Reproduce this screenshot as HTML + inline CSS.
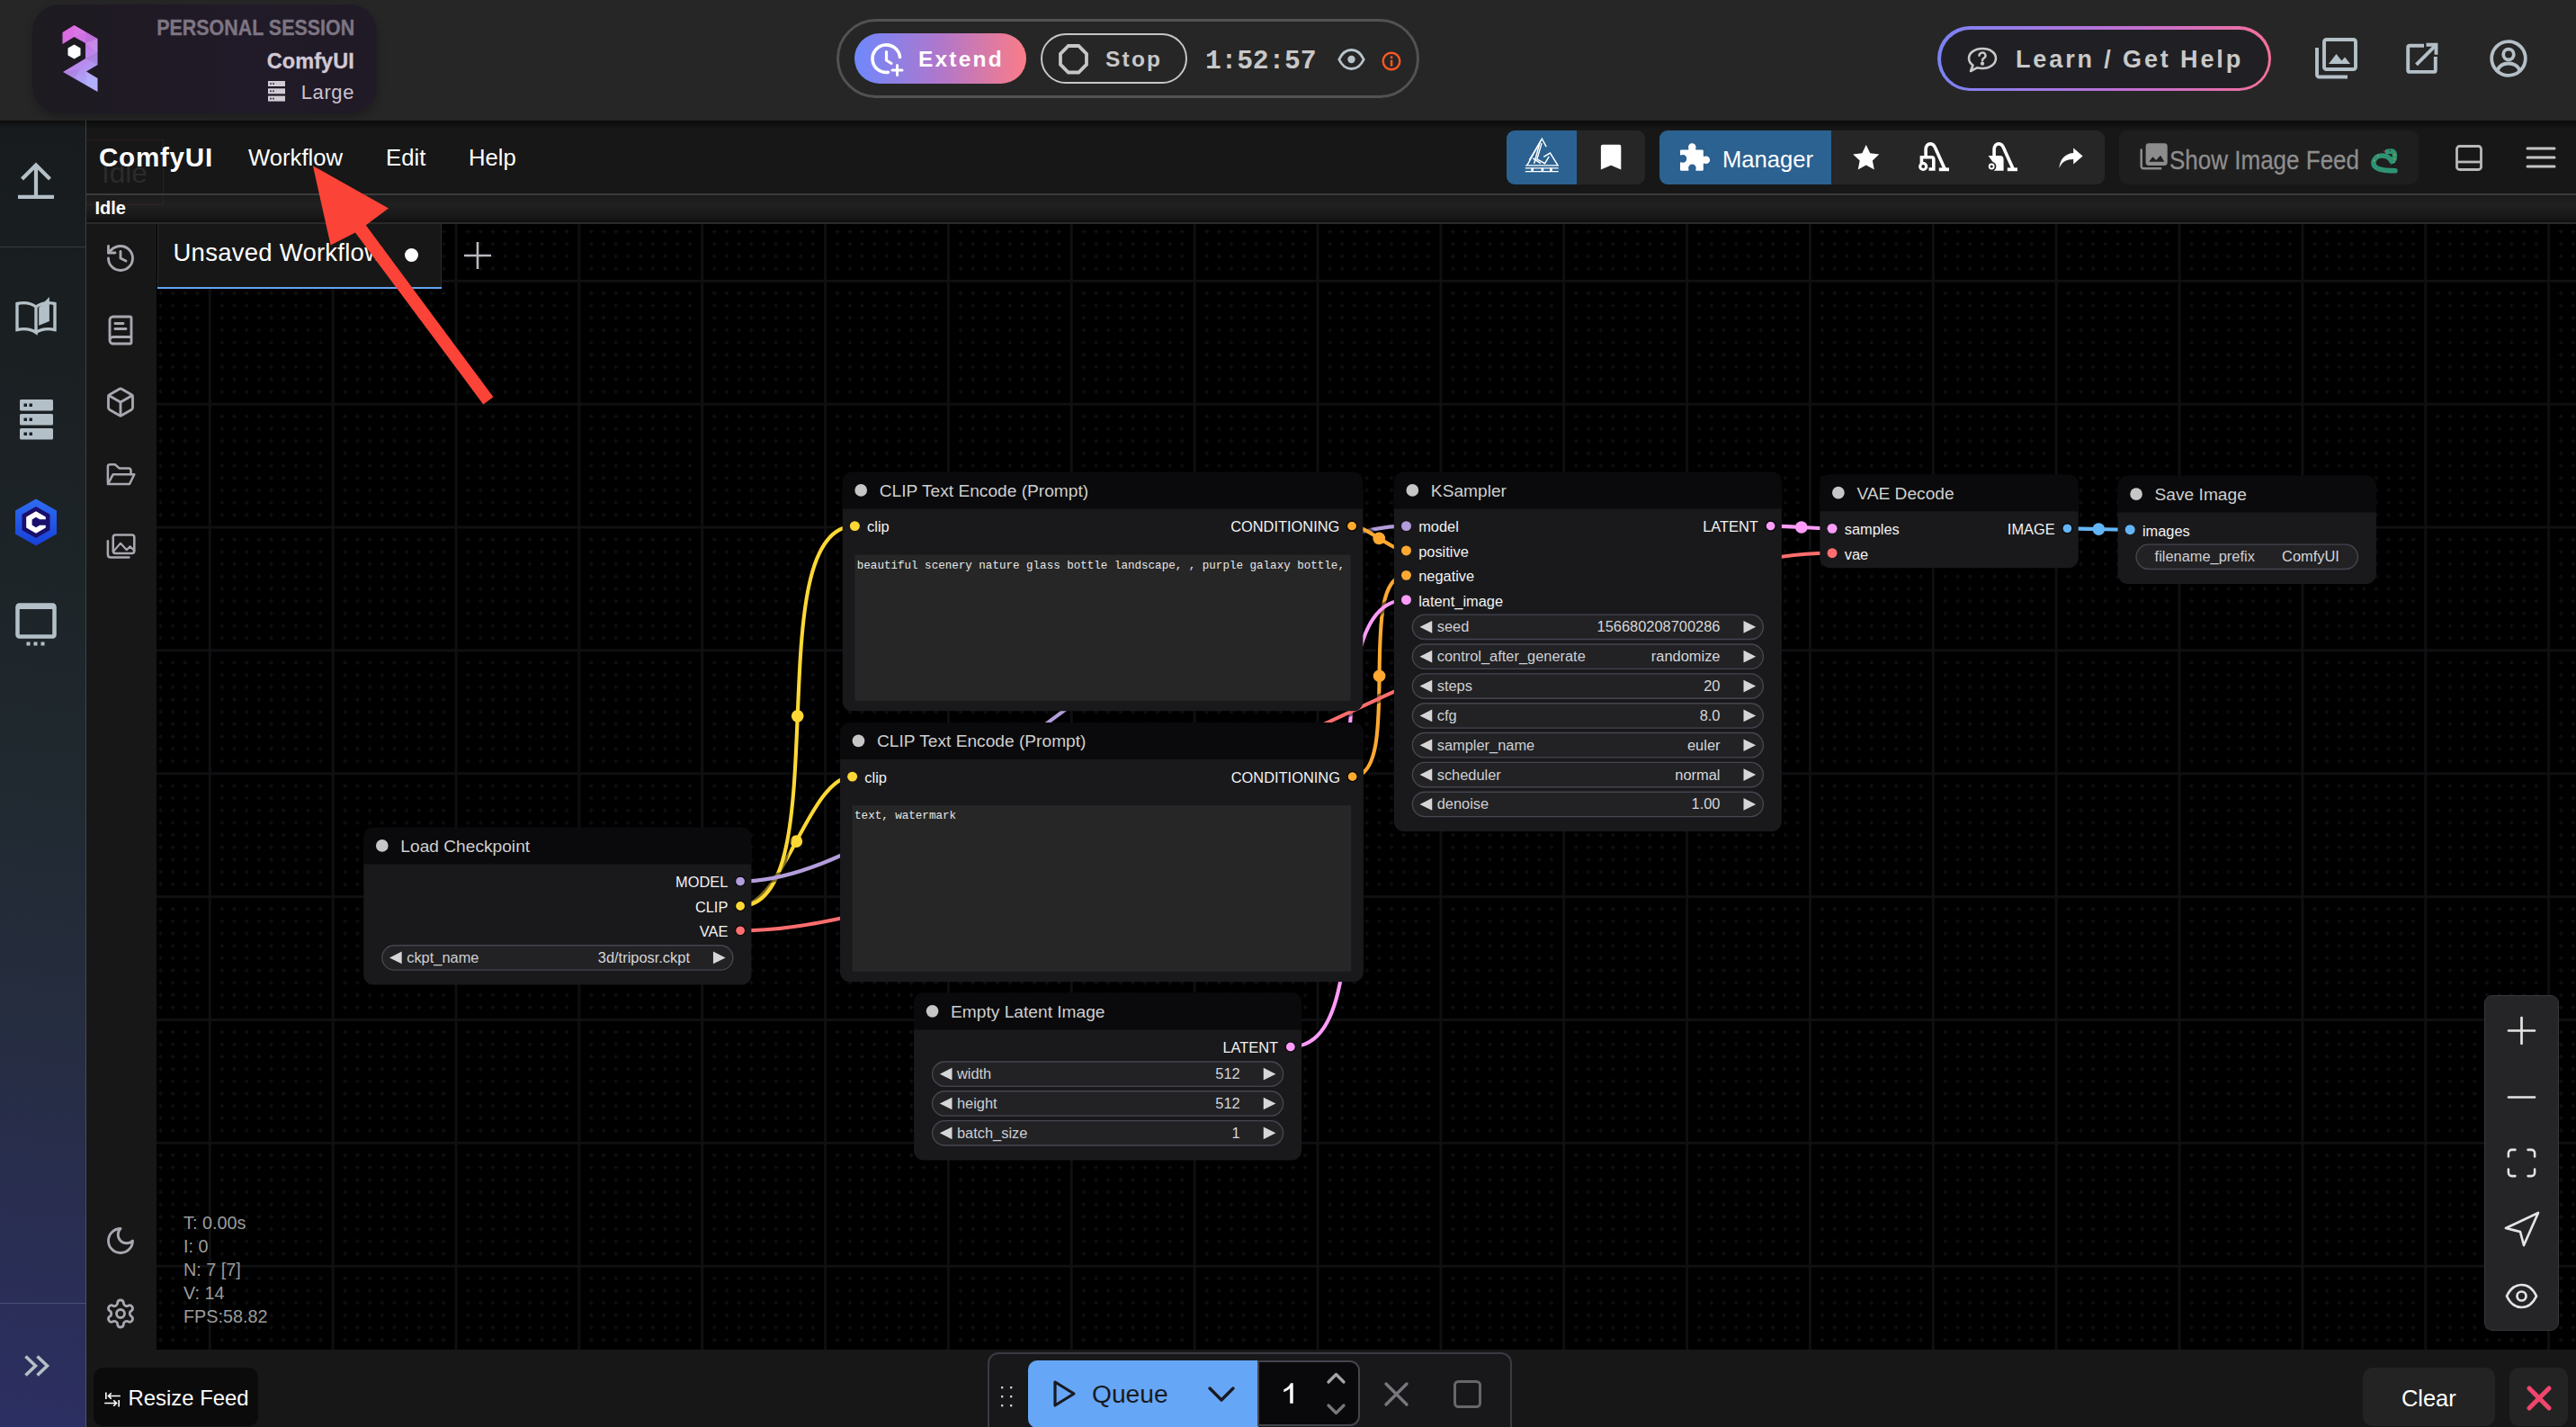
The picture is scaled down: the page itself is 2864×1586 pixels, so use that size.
<!DOCTYPE html>
<html><head><meta charset="utf-8"><title>ComfyUI</title>
<style>
*{box-sizing:border-box;margin:0;padding:0}
html,body{width:2864px;height:1586px;overflow:hidden;background:#171717}
body{position:relative;font-family:"Liberation Sans",sans-serif;color:#fff}
.abs{position:absolute}
.t{position:absolute;white-space:nowrap;line-height:1}
svg{position:absolute;overflow:visible}
</style></head><body>

<div class="abs" style="left:0;top:0;width:2864px;height:135px;background:#262626"></div>
<div class="abs" style="left:0;top:135px;width:2864px;height:8px;background:linear-gradient(#0c0c0c,rgba(23,23,23,0))"></div>
<!-- session card -->
<div class="abs" style="left:36px;top:5px;width:383px;height:121px;border-radius:30px;background:linear-gradient(90deg,#1d1a20 0%,#211a28 60%,#201a26 100%);box-shadow:0 4px 10px rgba(0,0,0,.25)"></div>
<svg style="left:69px;top:27px" width="41" height="76" viewBox="0 0 41 76">
<defs><linearGradient id="lgo" x1="0" y1="0" x2="0.35" y2="1"><stop offset="0" stop-color="#e766e0"/><stop offset="0.5" stop-color="#c378e6"/><stop offset="1" stop-color="#a9a9fb"/></linearGradient></defs>
<path d="M0.5 9 L13.5 1 L39.5 16 L39.5 45 L27 52.5 L39.5 60 L39.5 75 L1 53 L26 38 L26 21 L13.5 14 L0.5 22 Z" fill="url(#lgo)"/>
<path d="M13.500 1L26.500 8.500 13.500 14Z" fill="#fff" opacity=".06"/><path d="M26.500 8.500L39.500 16 26 21Z" fill="#000" opacity=".05"/><path d="M39.500 16V31L26 21Z" fill="#fff" opacity=".12"/><path d="M39.500 31V45L26 38Z" fill="#000" opacity=".07"/><path d="M1 53L20 49.500 14 60.500Z" fill="#000" opacity=".06"/><path d="M27 52.500L39.500 60V75L27 68Z" fill="#fff" opacity=".10"/><path d="M13.5 22.5 L20.5 26.5 L20.5 34.5 L13.5 38.5 L6.5 34.5 L6.5 26.5 Z" fill="#fff"/>
</svg>
<div class="t" id="ps" style="right:2470px;top:19.800px;font-size:23.5px;font-weight:bold;color:#7d7582;transform-origin:100% 50%;transform:scaleX(0.912);-webkit-text-stroke:0.35px #7d7582">PERSONAL SESSION</div>
<div class="t" id="cu" style="right:2470px;top:56.8px;font-size:23.5px;font-weight:bold;color:#d2c8d4;letter-spacing:0.1px;-webkit-text-stroke:0.3px #d2c8d4">ComfyUI</div>
<div class="t" id="lg_" style="right:2470px;top:92px;font-size:22px;color:#cbc2ce;letter-spacing:0.6px">Large</div>
<svg style="left:298px;top:90px" width="19" height="23" viewBox="0 0 19 23"><g fill="#d0cdd2"><rect x="0" y="0" width="19" height="6"/><rect x="0" y="8.3" width="19" height="6"/><rect x="0" y="16.6" width="19" height="6"/></g><g fill="#5a2a6a"><rect x="2" y="2.2" width="2" height="1.6"/><rect x="5" y="2.2" width="2" height="1.6"/><rect x="2" y="10.5" width="2" height="1.6"/><rect x="5" y="10.5" width="2" height="1.6"/><rect x="2" y="18.8" width="2" height="1.6"/><rect x="5" y="18.8" width="2" height="1.6"/></g></svg>

<!-- center pill -->
<div class="abs" style="left:930px;top:21px;width:648px;height:88px;border-radius:44px;border:3.5px solid #525252"></div>
<div class="abs" style="left:950px;top:37px;width:191px;height:56px;border-radius:28px;background:linear-gradient(90deg,#6f88fc 0%,#b077cb 50%,#fb7c88 100%)"></div>
<svg style="left:968px;top:48.200px" width="40" height="38" viewBox="0 0 40 38" fill="none" stroke="#fff" stroke-width="3.6" stroke-linecap="round" stroke-linejoin="round"><path d="M32.5 15.5A15.3 15.3 0 1 0 19.5 32.3"/><path d="M17.5 9.5V19L23 22.5" stroke-width="3.2"/><path d="M29.5 24.5V35.5M24 30H35" stroke-width="3"/></svg>
<div class="t" id="ext" style="left:1021px;top:54px;font-size:24.5px;font-weight:bold;color:#fff;letter-spacing:2.2px">Extend</div>
<div class="abs" style="left:1157px;top:37px;width:163px;height:56px;border-radius:28px;border:2px solid #c6c6c6"></div>
<svg style="left:1177px;top:48.700px" width="33" height="33.500" viewBox="0 0 33 33.500" fill="none" stroke="#c6c6c6" stroke-width="3.800" stroke-linejoin="miter"><path d="M10.800 2H22.200L31 10.800V22.700L22.200 31.500H10.800L2 22.700V10.800Z"/></svg>
<div class="t" id="stp" style="left:1229px;top:54px;font-size:24.5px;font-weight:bold;color:#c8c8c8;letter-spacing:2.2px">Stop</div>
<div class="t" id="tm" style="left:1340px;top:53.5px;font-size:29.7px;font-weight:bold;color:#c8c8c8;font-family:'Liberation Mono',monospace;letter-spacing:-0.2px">1:52:57</div>
<svg style="left:1487px;top:53px" width="31" height="26" viewBox="0 0 31 26" fill="none" stroke="#b8c4cb" stroke-width="2.8"><path d="M1.8 13C5 6 10 2.5 15.5 2.5S26 6 29.2 13C26 20 21 23.5 15.5 23.5S5 20 1.8 13Z"/><circle cx="15.5" cy="13" r="4.2" fill="#b8c4cb" stroke="none"/></svg>
<svg style="left:1536px;top:57px" width="22" height="22" viewBox="0 0 22 22"><circle cx="11" cy="11" r="9.3" fill="none" stroke="#ff5722" stroke-width="2.4"/><rect x="9.8" y="9.6" width="2.5" height="7" fill="#ff5722"/><rect x="9.8" y="5.4" width="2.5" height="2.6" fill="#ff5722"/></svg>

<!-- learn pill -->
<div class="abs" style="left:2154px;top:29px;width:371px;height:72px;border-radius:36px;background:linear-gradient(90deg,#7b83f6 0%,#c56fd3 60%,#f4709a 100%)"></div>
<div class="abs" style="left:2157.5px;top:32.5px;width:364px;height:65px;border-radius:33px;background:#202024"></div>
<svg style="left:2187px;top:52px" width="34" height="30" viewBox="0 0 34 30" fill="none" stroke="#c8c8c8" stroke-width="2.6" stroke-linejoin="round" stroke-linecap="round"><path d="M17 2C8.5 2 2 6.8 2 12.8c0 3 1.7 5.800 4.500 7.700L4 27l7-3.700c1.900.4 3.900.7 6 .7 8.500 0 15-5 15-11.200S25.500 2 17 2Z"/><path d="M13.500 9.800a3.500 3.200 0 1 1 5.200 2.800c-1.200.7-1.700 1.300-1.700 2.600" stroke-width="2.4"/><circle cx="17" cy="18.600" r="0.9" fill="#c8c8c8"/></svg>
<div class="t" id="lrn" style="left:2241px;top:53px;font-size:27px;font-weight:bold;color:#c9c9c9;letter-spacing:2.88px">Learn / Get Help</div>
<!-- right icons -->
<svg style="left:2574px;top:42px" width="47" height="46" viewBox="0 0 47 46" fill="none" stroke="#b4c0c7" stroke-width="3.900" stroke-linejoin="round"><rect x="10" y="2" width="35" height="33" rx="2.500"/><path d="M2 11V41a2.500 2.500 0 0 0 2.500 2.500H36"/><path d="M15 29l8.500-11 6 7.500 3.500-4 6 7.500z" fill="#b4c0c7" stroke="none"/></svg>
<svg style="left:0;top:0" width="2864" height="135" viewBox="0 0 2864 135" fill="none" stroke="#b4c0c7" stroke-width="3.900" stroke-linejoin="miter"><path d="M2695 50.700H2679.200Q2677.200 50.700 2677.200 52.700V77.900Q2677.200 79.900 2679.200 79.900H2705.800Q2707.800 79.900 2707.800 77.900V63"/><path d="M2686.500 71.800L2708 50.300"/><path d="M2697.500 49.800H2708.500V60.800"/></svg>
<svg style="left:2768px;top:44px" width="42" height="42" viewBox="0 0 42 42" fill="none" stroke="#b4c0c7" stroke-width="3.800"><circle cx="21" cy="21" r="18.800"/><circle cx="21" cy="16.500" r="5.800"/><path d="M8.500 34.500C11 28 15.500 26.500 21 26.500S31 28 33.500 34.500"/></svg>

<div class="abs" style="left:0;top:134px;width:95px;height:1452px;background:linear-gradient(186deg,#171b1d 0%,#1b2124 25%,#20292f 50%,#252d3f 68%,#292e52 84%,#2c2f62 100%)"></div>
<div class="abs" style="left:0;top:134px;width:95px;height:8px;background:linear-gradient(#0c0c0c,rgba(23,23,23,0))"></div>
<div class="abs" style="left:94.500px;top:134px;width:1.500px;height:1452px;background:linear-gradient(#3a3f44 0%,#3d4349 50%,#4c527c 100%)"></div>
<div class="abs" style="left:0;top:273.500px;width:95px;height:1.500px;background:#363b3f"></div>
<div class="abs" style="left:0;top:1447.500px;width:95px;height:1.500px;background:#4a4f78"></div>
<svg style="left:19px;top:180px" width="42" height="42" viewBox="0 0 42 42" fill="none" stroke="#b4c0c7" stroke-width="4.200"><path d="M21 38V4M5.500 19L21 3.500 36.500 19M1 38.800H41"/></svg>
<svg style="left:17px;top:329px" width="46" height="43" viewBox="0 0 46 43" fill="none" stroke="#b4c0c7" stroke-width="3.400" stroke-linejoin="miter"><path d="M2 8.500C9 7 17 7.500 23 12V40.500C17 36.500 9 36 2 37.500Z"/><path d="M23 12C29 7.500 37 7 44 8.500V37.500C37 36 29 36.500 23 40.500"/><path d="M26.200 12.700L37.900 1V28L26.200 32.700Z" fill="#b4c0c7" stroke="none"/></svg>
<svg style="left:22px;top:444px" width="37" height="46" viewBox="0 0 37 46"><g fill="#b4c0c7"><rect x="0" y="0" width="37" height="12.500" rx="1.500"/><rect x="0" y="16" width="37" height="12.500" rx="1.500"/><rect x="0" y="32" width="37" height="12.500" rx="1.500"/></g><g fill="#1a2026"><rect x="4.500" y="4.500" width="3.500" height="3.500"/><rect x="10.500" y="4.500" width="3.500" height="3.500"/><rect x="4.500" y="20.500" width="3.500" height="3.500"/><rect x="10.500" y="20.500" width="3.500" height="3.500"/><rect x="4.500" y="36.500" width="3.500" height="3.500"/><rect x="10.500" y="36.500" width="3.500" height="3.500"/></g></svg>
<svg style="left:16px;top:554px" width="48" height="53" viewBox="0 0 48 53"><defs><linearGradient id="hx" x1="0" y1="0" x2="0" y2="1"><stop offset="0" stop-color="#2f6df2"/><stop offset="1" stop-color="#1740d8"/></linearGradient></defs><path d="M24 0.500L47 13.500V39.500L24 52.500L1 39.500V13.500Z" fill="url(#hx)"/><path d="M24 9L39.500 17.800V35.200L24 44L8.500 35.200V17.800Z" fill="#1a0f6a"/><path d="M24 14.200L34.800 20.400V23.200H28.200L24 20.800 19.600 23.400V29.600L24 32.200 28.200 29.800H34.800V32.600L24 38.800 13.200 32.600V20.400Z" fill="#fff"/></svg>
<svg style="left:17px;top:670px" width="46" height="50" viewBox="0 0 46 50"><rect x="2.500" y="2.500" width="41" height="35" rx="2" fill="none" stroke="#b4c0c7" stroke-width="4.500"/><rect x="2.500" y="2" width="41" height="5" fill="#b4c0c7"/><g fill="#b4c0c7"><rect x="12.500" y="43.500" width="4" height="4"/><rect x="20.500" y="43.500" width="4" height="4"/><rect x="28.500" y="43.500" width="4" height="4"/></g></svg>
<svg style="left:26px;top:1505px" width="29" height="26" viewBox="0 0 29 26" fill="none" stroke="#b4c0c7" stroke-width="3.600" stroke-linejoin="miter"><path d="M2.500 2.500L13.500 13 2.500 23.500M15.500 2.500L26.500 13 15.500 23.500"/></svg>

<div class="abs" style="left:96px;top:134px;width:2768px;height:82px;background:#171717"></div>
<div class="abs" style="left:96px;top:134px;width:2768px;height:10px;background:linear-gradient(#0b0b0b,rgba(23,23,23,0))"></div>
<div class="t" style="left:113px;top:177px;font-size:31.500px;color:#2b2b2b">Idle</div>
<div class="abs" style="left:96px;top:215px;width:2768px;height:1.500px;background:#3b3b3b"></div>
<div class="abs" style="left:96px;top:216.500px;width:2768px;height:31px;background:linear-gradient(#1b1b1b 0%,#202020 35%,#191919 70%,#101010 100%)"></div>
<div class="abs" style="left:96px;top:247.300px;width:2768px;height:1.700px;background:#292929"></div>
<div class="abs" style="left:96px;top:155px;width:85.500px;height:73px;border:1px solid rgba(90,40,40,0.35);border-left:none"></div>
<div class="t" id="idle" style="left:105.500px;top:221px;font-size:20px;font-weight:bold;color:#fff">Idle</div>
<div class="t" id="logo" style="left:110px;top:159.900px;font-size:29.600px;font-weight:bold;color:#fff;letter-spacing:0.75px">ComfyUI</div>
<div class="t" id="m1" style="left:276px;top:162.600px;font-size:25.700px;color:#fff">Workflow</div>
<div class="t" id="m2" style="left:429px;top:162.600px;font-size:25.700px;color:#fff">Edit</div>
<div class="t" id="m3" style="left:521px;top:162.600px;font-size:25.700px;color:#fff">Help</div>

<!-- group 1 -->
<div class="abs" style="left:1675px;top:145px;width:154px;height:60px;border-radius:9px;background:#262626"></div>
<div class="abs" style="left:1675px;top:145px;width:78px;height:60px;border-radius:9px 0 0 9px;background:#2b6291"></div>
<svg style="left:1670px;top:140px" width="170" height="70" viewBox="0 0 2576 1061" fill="none" stroke="#fff" stroke-width="22" stroke-linejoin="miter" stroke-linecap="butt">
<path d="M420 665L672 215 745 350"/><path d="M395 665H940L810 455 700 522"/><path d="M460 575L655 245"/><path d="M640 270L540 632"/><path d="M668 290L588 560 720 632 792 515"/><path d="M520 545L650 632"/>
<path d="M390 710H950" stroke-width="20"/><path d="M390 766H950" stroke-width="18"/><path d="M510 710V766M680 710V766M825 710V766" stroke-width="40"/>
<path d="M1665 345A30 30 0 0 1 1695 315H1975A30 30 0 0 1 2005 345V735L1835 662 1665 735Z" fill="#fff" stroke="none"/></svg>
<!-- group 2 -->
<div class="abs" style="left:1845px;top:145px;width:495px;height:60px;border-radius:9px;background:#262626"></div>
<div class="abs" style="left:1845px;top:145px;width:191px;height:60px;border-radius:9px 0 0 9px;background:#2b6291"></div>
<svg style="left:1867px;top:158px" width="34" height="33" viewBox="0 0 34 33"><path d="M10 5.500a4.300 4.300 0 1 1 8.600 0c0 1-.5 1.700-.5 2.300 0 .4.300.7.800.7H25.500a1.300 1.300 0 0 1 1.300 1.300v5.300c0 .5.300.8.700.8.600 0 1.300-.5 2.300-.5a4.300 4.300 0 1 1 0 8.600c-1 0-1.700-.5-2.300-.5-.4 0-.7.300-.7.800V30.500a1.300 1.300 0 0 1-1.300 1.300H19c-.5 0-.8-.3-.8-.7 0-.6.500-1.300.5-2.300a4.300 4.300 0 1 0-8.600 0c0 1 .5 1.700.5 2.300 0 .4-.3.700-.8.700H2.300A1.300 1.300 0 0 1 1 30.500V23c0-.5.300-.8.700-.8.600 0 1.300.5 2.300.5a4.300 4.300 0 1 0 0-8.600c-1 0-1.700.5-2.300.5-.4 0-.7-.3-.7-.8V9.800A1.300 1.300 0 0 1 2.300 8.500H9.700c.5 0 .8-.3.800-.7 0-.6-.5-1.300-.5-2.300z" fill="#fff"/></svg>
<div class="t" id="mgr" style="left:1915px;top:164.500px;font-size:25.600px;color:#fff">Manager</div>
<svg style="left:2058.500px;top:159.500px" width="31.500" height="29.500" viewBox="0 0 33 32"><path d="M16.500 1L21.300 11.200 32.300 12.500 24.200 20.100 26.300 31 16.500 25.600 6.700 31 8.800 20.100 0.700 12.500 11.700 11.200Z" fill="#fff"/></svg>
<svg style="left:2133.200px;top:158px" width="35" height="33" viewBox="0 0 35 33" fill="none" stroke="#fff" stroke-width="3.600"><path d="M8.100 15V8.100C8.100 4.200 10.300 1.900 13.400 1.900 16 1.900 17.600 3.700 18.800 6.800L29.400 30.200"/><path d="M22.800 30.300H34" stroke-width="3.800"/><path d="M3.400 23.500V16.800H14.300Q16.800 16.800 16.800 19.300V30H11.500"/><circle cx="5.200" cy="27" r="3.500" stroke-width="3.200"/></svg>
<svg style="left:2209.300px;top:158px" width="35" height="33" viewBox="0 0 35 33" fill="none" stroke="#fff" stroke-width="3.600"><path d="M8.100 15V8.100C8.100 4.200 10.300 1.900 13.400 1.900 16 1.900 17.600 3.700 18.800 6.800L29.400 30.200"/><path d="M22.800 30.300H34" stroke-width="3.800"/><path d="M1.600 15H14.300Q18.600 15 18.600 19.300V31.800H8V24Z" fill="#fff" stroke="none"/><circle cx="5.200" cy="27" r="4.300" fill="#fff" stroke="#262626" stroke-width="1.800"/><circle cx="5.200" cy="27" r="1.600" fill="#262626" stroke="none"/></svg>
<svg style="left:2287.500px;top:164px" width="29" height="23.500" viewBox="0 0 30 26"><path d="M18 0.500L29.500 10.500 18 20.500V14.500C9.500 14.500 4 17.500 0.500 25.500 1.500 14.500 7 7.500 18 6.500Z" fill="#fff"/></svg>
<!-- show image feed -->
<div class="abs" style="left:2356px;top:145px;width:333px;height:60px;border-radius:9px;background:#1e1e1e"></div>
<svg style="left:2360px;top:145px" width="340" height="60" viewBox="0 0 2576 455"><path d="M156 155V300Q156 321 177 321H327" fill="none" stroke="#8c8c8c" stroke-width="19"/><rect x="193" y="108" width="183" height="188" rx="26" fill="#8c8c8c"/><path d="M220 264L252 221 281 250 318 211 350 264Z" fill="#1e1e1e"/>
<g fill="none" stroke="#2f9373" stroke-width="42" stroke-linecap="round" stroke-linejoin="round"><path d="M2230 178L2268 175C2302 182 2298 250 2268 262 2236 200 2132 192 2114 265 2106 322 2172 338 2296 340"/></g><path d="M2196 170L2222 190" stroke="#d6336c" stroke-width="7"/><g fill="#c9c23a"><circle cx="2150" cy="212" r="5"/><circle cx="2118" cy="252" r="5"/><circle cx="2292" cy="205" r="5"/><circle cx="2290" cy="240" r="5"/><circle cx="2285" cy="268" r="5"/></g><circle cx="2254" cy="172" r="5" fill="#123"/></svg>
<div class="t" id="sif" style="left:2412px;top:166px;font-size:26px;color:#8e8e8e;-webkit-text-stroke:0.25px #8e8e8e;transform-origin:0 100%;transform:scaleY(1.10)">Show Image Feed</div>
<svg style="left:2730px;top:161px" width="30" height="29" viewBox="0 0 30 29" fill="none" stroke="#b9b9b9" stroke-width="2.800"><rect x="1.500" y="1.500" width="27" height="26" rx="3"/><path d="M1.500 19H28.500"/></svg>
<svg style="left:2808px;top:163px" width="34" height="24" viewBox="0 0 34 24" stroke="#c4c4c4" stroke-width="3" stroke-linecap="round"><path d="M2 2H32M2 12H32M2 22H32"/></svg>

<div class="abs" style="left:96px;top:249px;width:78.500px;height:1251px;background:#171717"></div>
<svg style="left:116px;top:269px" width="36" height="36" viewBox="0 0 24 24" fill="none" stroke="#a8a8b0" stroke-width="1.900" stroke-linecap="round" stroke-linejoin="round"><path d="M3 12a9 9 0 1 0 9-9 9.750 9.750 0 0 0-6.740 2.740L3 8"/><path d="M3 3v5h5"/><path d="M12 7v5l4 2"/></svg>
<svg style="left:116px;top:349px" width="36" height="36" viewBox="0 0 24 24" fill="none" stroke="#a8a8b0" stroke-width="1.900" stroke-linecap="round" stroke-linejoin="round"><path d="M4 19.500v-15A2.500 2.500 0 0 1 6.500 2H19a1 1 0 0 1 1 1v18a1 1 0 0 1-1 1H6.500a1 1 0 0 1 0-5H20"/><path d="M8 11h8"/><path d="M8 7h6"/></svg>
<svg style="left:116px;top:429px" width="36" height="36" viewBox="0 0 24 24" fill="none" stroke="#a8a8b0" stroke-width="1.900" stroke-linecap="round" stroke-linejoin="round"><path d="M21 8a2 2 0 0 0-1-1.730l-7-4a2 2 0 0 0-2 0l-7 4A2 2 0 0 0 3 8v8a2 2 0 0 0 1 1.730l7 4a2 2 0 0 0 2 0l7-4A2 2 0 0 0 21 16Z"/><path d="m3.300 7 8.700 5 8.700-5"/><path d="M12 22V12"/></svg>
<svg style="left:113.650px;top:510.670px" width="41.190" height="32.360" viewBox="60 920 140 110" fill="none" stroke="#a8a8b0" stroke-width="8.600" stroke-linejoin="round" stroke-linecap="round"><path d="M80 1005V946Q80 938 88 938H107L123 952H159Q167 952 167 960V974"/><path d="M80 1012L100 975H180L162 1012Z"/></svg>
<svg style="left:113.650px;top:590.100px" width="41.190" height="35.300" viewBox="60 1190 140 120" fill="none" stroke="#a8a8b0" stroke-width="8.600" stroke-linejoin="round" stroke-linecap="round"><rect x="100" y="1205" width="80" height="70" rx="9"/><path d="M80 1228V1279Q80 1290 91 1290H160"/><path d="M102 1267L128 1237 151 1262 164 1249 180 1265" stroke-width="7.500"/></svg>
<svg style="left:116px;top:1361px" width="36" height="36" viewBox="0 0 24 24" fill="none" stroke="#a8a8b0" stroke-width="1.900" stroke-linecap="round" stroke-linejoin="round"><path d="M12 3a6 6 0 0 0 9 9 9 9 0 1 1-9-9Z"/></svg>
<svg style="left:116px;top:1442px" width="36" height="36" viewBox="0 0 24 24" fill="none" stroke="#a8a8b0" stroke-width="1.900" stroke-linecap="round" stroke-linejoin="round"><path d="M12.220 2h-.440a2 2 0 0 0-2 2v.180a2 2 0 0 1-1 1.730l-.430.250a2 2 0 0 1-2 0l-.150-.080a2 2 0 0 0-2.730.730l-.220.380a2 2 0 0 0 .730 2.730l.150.100a2 2 0 0 1 1 1.720v.510a2 2 0 0 1-1 1.740l-.150.090a2 2 0 0 0-.730 2.730l.220.380a2 2 0 0 0 2.730.730l.150-.080a2 2 0 0 1 2 0l.430.250a2 2 0 0 1 1 1.730V20a2 2 0 0 0 2 2h.440a2 2 0 0 0 2-2v-.180a2 2 0 0 1 1-1.730l.430-.250a2 2 0 0 1 2 0l.150.080a2 2 0 0 0 2.730-.730l.220-.390a2 2 0 0 0-.730-2.730l-.150-.080a2 2 0 0 1-1-1.740v-.500a2 2 0 0 1 1-1.740l.150-.090a2 2 0 0 0 .730-2.730l-.220-.380a2 2 0 0 0-2.730-.730l-.150.080a2 2 0 0 1-2 0l-.430-.250a2 2 0 0 1-1-1.730V4a2 2 0 0 0-2-2z"/><circle cx="12" cy="12" r="3"/></svg>
<svg id="lg" width="2690" height="1251" viewBox="174 249 2690 1251" style="position:absolute;left:174px;top:249px;display:block">
<defs>
<pattern id="grid" x="368.7" y="310.9" width="136.86" height="136.86" patternUnits="userSpaceOnUse"><rect width="136.86" height="136.86" fill="#000"/><rect x="0" y="0" width="2.8" height="136.86" fill="#0f1012"/><rect x="0" y="0" width="136.86" height="2.8" fill="#0f1012"/><path d="M12.69 14.99h4.6M14.99 12.69v4.6M12.69 28.67h4.6M14.99 26.37v4.6M12.69 42.36h4.6M14.99 40.06v4.6M12.69 56.04h4.6M14.99 53.74v4.6M12.69 69.73h4.6M14.99 67.43v4.6M12.69 83.42h4.6M14.99 81.12v4.6M12.69 97.1h4.6M14.99 94.8v4.6M12.69 110.79h4.6M14.99 108.49v4.6M12.69 124.47h4.6M14.99 122.17v4.6M26.37 14.99h4.6M28.67 12.69v4.6M26.37 28.67h4.6M28.67 26.37v4.6M26.37 42.36h4.6M28.67 40.06v4.6M26.37 56.04h4.6M28.67 53.74v4.6M26.37 69.73h4.6M28.67 67.43v4.6M26.37 83.42h4.6M28.67 81.12v4.6M26.37 97.1h4.6M28.67 94.8v4.6M26.37 110.79h4.6M28.67 108.49v4.6M26.37 124.47h4.6M28.67 122.17v4.6M40.06 14.99h4.6M42.36 12.69v4.6M40.06 28.67h4.6M42.36 26.37v4.6M40.06 42.36h4.6M42.36 40.06v4.6M40.06 56.04h4.6M42.36 53.74v4.6M40.06 69.73h4.6M42.36 67.43v4.6M40.06 83.42h4.6M42.36 81.12v4.6M40.06 97.1h4.6M42.36 94.8v4.6M40.06 110.79h4.6M42.36 108.49v4.6M40.06 124.47h4.6M42.36 122.17v4.6M53.74 14.99h4.6M56.04 12.69v4.6M53.74 28.67h4.6M56.04 26.37v4.6M53.74 42.36h4.6M56.04 40.06v4.6M53.74 56.04h4.6M56.04 53.74v4.6M53.74 69.73h4.6M56.04 67.43v4.6M53.74 83.42h4.6M56.04 81.12v4.6M53.74 97.1h4.6M56.04 94.8v4.6M53.74 110.79h4.6M56.04 108.49v4.6M53.74 124.47h4.6M56.04 122.17v4.6M67.43 14.99h4.6M69.73 12.69v4.6M67.43 28.67h4.6M69.73 26.37v4.6M67.43 42.36h4.6M69.73 40.06v4.6M67.43 56.04h4.6M69.73 53.74v4.6M67.43 69.73h4.6M69.73 67.43v4.6M67.43 83.42h4.6M69.73 81.12v4.6M67.43 97.1h4.6M69.73 94.8v4.6M67.43 110.79h4.6M69.73 108.49v4.6M67.43 124.47h4.6M69.73 122.17v4.6M81.12 14.99h4.6M83.42 12.69v4.6M81.12 28.67h4.6M83.42 26.37v4.6M81.12 42.36h4.6M83.42 40.06v4.6M81.12 56.04h4.6M83.42 53.74v4.6M81.12 69.73h4.6M83.42 67.43v4.6M81.12 83.42h4.6M83.42 81.12v4.6M81.12 97.1h4.6M83.42 94.8v4.6M81.12 110.79h4.6M83.42 108.49v4.6M81.12 124.47h4.6M83.42 122.17v4.6M94.8 14.99h4.6M97.1 12.69v4.6M94.8 28.67h4.6M97.1 26.37v4.6M94.8 42.36h4.6M97.1 40.06v4.6M94.8 56.04h4.6M97.1 53.74v4.6M94.8 69.73h4.6M97.1 67.43v4.6M94.8 83.42h4.6M97.1 81.12v4.6M94.8 97.1h4.6M97.1 94.8v4.6M94.8 110.79h4.6M97.1 108.49v4.6M94.8 124.47h4.6M97.1 122.17v4.6M108.49 14.99h4.6M110.79 12.69v4.6M108.49 28.67h4.6M110.79 26.37v4.6M108.49 42.36h4.6M110.79 40.06v4.6M108.49 56.04h4.6M110.79 53.74v4.6M108.49 69.73h4.6M110.79 67.43v4.6M108.49 83.42h4.6M110.79 81.12v4.6M108.49 97.1h4.6M110.79 94.8v4.6M108.49 110.79h4.6M110.79 108.49v4.6M108.49 124.47h4.6M110.79 122.17v4.6M122.17 14.99h4.6M124.47 12.69v4.6M122.17 28.67h4.6M124.47 26.37v4.6M122.17 42.36h4.6M124.47 40.06v4.6M122.17 56.04h4.6M124.47 53.74v4.6M122.17 69.73h4.6M124.47 67.43v4.6M122.17 83.42h4.6M124.47 81.12v4.6M122.17 97.1h4.6M124.47 94.8v4.6M122.17 110.79h4.6M124.47 108.49v4.6M122.17 124.47h4.6M124.47 122.17v4.6" stroke="#111214" stroke-width="1.3" fill="none"/></pattern>
</defs>
<rect x="174" y="249" width="2690" height="1251" fill="url(#grid)"/>
<g transform="translate(368.7 310.9) scale(1.3686)" font-family="Liberation Sans, sans-serif">
<path d="M332 508.6C366.76 508.6 388.24 403.5 423 403.5" fill="none" stroke="rgba(0,0,0,0.5)" stroke-width="7"/>
<path d="M332 508.6C366.76 508.6 388.24 403.5 423 403.5" fill="none" stroke="#FDD835" stroke-width="3"/>
<circle cx="377.5" cy="456.05" r="5" fill="#FDD835"/>
<path d="M332 508.6C412.58 508.6 344.42 200 425 200" fill="none" stroke="rgba(0,0,0,0.5)" stroke-width="7"/>
<path d="M332 508.6C412.58 508.6 344.42 200 425 200" fill="none" stroke="#FDD835" stroke-width="3"/>
<circle cx="378.5" cy="354.3" r="5" fill="#FDD835"/>
<path d="M332 488.6C485.29 488.6 719.71 200 873 200" fill="none" stroke="rgba(0,0,0,0.5)" stroke-width="7"/>
<path d="M332 488.6C485.29 488.6 719.71 200 873 200" fill="none" stroke="#B39DDB" stroke-width="3"/>
<circle cx="602.5" cy="344.3" r="5" fill="#B39DDB"/>
<path d="M828.85 200C840.97 200 860.88 220 873 220" fill="none" stroke="rgba(0,0,0,0.5)" stroke-width="7"/>
<path d="M828.85 200C840.97 200 860.88 220 873 220" fill="none" stroke="#FFA931" stroke-width="3"/>
<circle cx="850.92" cy="210" r="5" fill="#FFA931"/>
<path d="M829.28 403.5C871.59 403.5 830.69 240 873 240" fill="none" stroke="rgba(0,0,0,0.5)" stroke-width="7"/>
<path d="M829.28 403.5C871.59 403.5 830.69 240 873 240" fill="none" stroke="#FFA931" stroke-width="3"/>
<circle cx="851.14" cy="321.75" r="5" fill="#FFA931"/>
<path d="M779 623C872.74 623 779.26 260 873 260" fill="none" stroke="rgba(0,0,0,0.5)" stroke-width="7"/>
<path d="M779 623C872.74 623 779.26 260 873 260" fill="none" stroke="#FF9CF9" stroke-width="3"/>
<circle cx="826" cy="441.5" r="5" fill="#FF9CF9"/>
<path d="M1169 200C1181.51 200 1206.49 202 1219 202" fill="none" stroke="rgba(0,0,0,0.5)" stroke-width="7"/>
<path d="M1169 200C1181.51 200 1206.49 202 1219 202" fill="none" stroke="#FF9CF9" stroke-width="3"/>
<circle cx="1194" cy="201" r="5" fill="#FF9CF9"/>
<path d="M332 528.6C566.62 528.6 984.38 222 1219 222" fill="none" stroke="rgba(0,0,0,0.5)" stroke-width="7"/>
<path d="M332 528.6C566.62 528.6 984.38 222 1219 222" fill="none" stroke="#FF6E6E" stroke-width="3"/>
<circle cx="775.5" cy="375.3" r="5" fill="#FF6E6E"/>
<path d="M1410 202C1422.75 202 1448.25 203 1461 203" fill="none" stroke="rgba(0,0,0,0.5)" stroke-width="7"/>
<path d="M1410 202C1422.75 202 1448.25 203 1461 203" fill="none" stroke="#64B5F6" stroke-width="3"/>
<circle cx="1435.5" cy="202.5" r="5" fill="#64B5F6"/>
<g transform="translate(26 474.6)">
<path d="M0 -15H315V90a8 8 0 0 1 -8 8H8a8 8 0 0 1 -8 -8Z" fill="#19191c"/>
<path d="M0 0V-22a8 8 0 0 1 8 -8H307a8 8 0 0 1 8 8V0Z" fill="#0a0a0c"/>
<circle cx="15" cy="-15" r="5" fill="#c6c6c6"/>
<text x="30" y="-10" font-size="14" fill="#cfcfcf">Load Checkpoint</text>
<circle cx="306" cy="14" r="4" fill="#B39DDB" stroke="#000" stroke-width="0.8"/>
<text x="296" y="19" font-size="12" fill="#f2f2f2" text-anchor="end">MODEL</text>
<circle cx="306" cy="34" r="4" fill="#FDD835" stroke="#000" stroke-width="0.8"/>
<text x="296" y="39" font-size="12" fill="#f2f2f2" text-anchor="end">CLIP</text>
<circle cx="306" cy="54" r="4" fill="#FF6E6E" stroke="#000" stroke-width="0.8"/>
<text x="296" y="59" font-size="12" fill="#f2f2f2" text-anchor="end">VAE</text>
<rect x="15" y="66" width="285" height="20" rx="10" fill="#222225" stroke="#45454f" stroke-width="1"/>
<path d="M31 71L21 76L31 81Z" fill="#d6d6d8"/>
<path d="M284 71L294 76L284 81Z" fill="#d6d6d8"/>
<text x="35" y="80" font-size="12" fill="#cfcfd2">ckpt_name</text>
<text x="265" y="80" font-size="12" fill="#d6d6d8" text-anchor="end">3d/triposr.ckpt</text>
</g>
<g transform="translate(473 609)">
<path d="M0 -15H315V98a8 8 0 0 1 -8 8H8a8 8 0 0 1 -8 -8Z" fill="#19191c"/>
<path d="M0 0V-22a8 8 0 0 1 8 -8H307a8 8 0 0 1 8 8V0Z" fill="#0a0a0c"/>
<circle cx="15" cy="-15" r="5" fill="#c6c6c6"/>
<text x="30" y="-10" font-size="14" fill="#cfcfcf">Empty Latent Image</text>
<circle cx="306" cy="14" r="4" fill="#FF9CF9" stroke="#000" stroke-width="0.8"/>
<text x="296" y="19" font-size="12" fill="#f2f2f2" text-anchor="end">LATENT</text>
<rect x="15" y="26" width="285" height="20" rx="10" fill="#222225" stroke="#45454f" stroke-width="1"/>
<path d="M31 31L21 36L31 41Z" fill="#d6d6d8"/>
<path d="M284 31L294 36L284 41Z" fill="#d6d6d8"/>
<text x="35" y="40" font-size="12" fill="#cfcfd2">width</text>
<text x="265" y="40" font-size="12" fill="#d6d6d8" text-anchor="end">512</text>
<rect x="15" y="50" width="285" height="20" rx="10" fill="#222225" stroke="#45454f" stroke-width="1"/>
<path d="M31 55L21 60L31 65Z" fill="#d6d6d8"/>
<path d="M284 55L294 60L284 65Z" fill="#d6d6d8"/>
<text x="35" y="64" font-size="12" fill="#cfcfd2">height</text>
<text x="265" y="64" font-size="12" fill="#d6d6d8" text-anchor="end">512</text>
<rect x="15" y="74" width="285" height="20" rx="10" fill="#222225" stroke="#45454f" stroke-width="1"/>
<path d="M31 79L21 84L31 89Z" fill="#d6d6d8"/>
<path d="M284 79L294 84L284 89Z" fill="#d6d6d8"/>
<text x="35" y="88" font-size="12" fill="#cfcfd2">batch_size</text>
<text x="265" y="88" font-size="12" fill="#d6d6d8" text-anchor="end">1</text>
</g>
<g transform="translate(415 186)">
<path d="M0 -15H422.85V156.31a8 8 0 0 1 -8 8H8a8 8 0 0 1 -8 -8Z" fill="#19191c"/>
<path d="M0 0V-22a8 8 0 0 1 8 -8H414.85a8 8 0 0 1 8 8V0Z" fill="#0a0a0c"/>
<circle cx="15" cy="-15" r="5" fill="#c6c6c6"/>
<text x="30" y="-10" font-size="14" fill="#cfcfcf">CLIP Text Encode (Prompt)</text>
<circle cx="10" cy="14" r="4" fill="#FDD835"/>
<text x="20" y="19" font-size="12" fill="#f2f2f2">clip</text>
<circle cx="413.85" cy="14" r="4" fill="#FFA931" stroke="#000" stroke-width="0.8"/>
<text x="403.85" y="19" font-size="12" fill="#f2f2f2" text-anchor="end">CONDITIONING</text>
<rect x="10" y="37.3" width="402.85" height="118.61" fill="#262626"/>
<text x="11.8" y="48.5" font-size="9.178" font-family="Liberation Mono, monospace" fill="#e8e8e8">beautiful scenery nature glass bottle landscape, , purple galaxy bottle,</text>
</g>
<g transform="translate(413 389.5)">
<path d="M0 -15H425.28V172.61a8 8 0 0 1 -8 8H8a8 8 0 0 1 -8 -8Z" fill="#19191c"/>
<path d="M0 0V-22a8 8 0 0 1 8 -8H417.28a8 8 0 0 1 8 8V0Z" fill="#0a0a0c"/>
<circle cx="15" cy="-15" r="5" fill="#c6c6c6"/>
<text x="30" y="-10" font-size="14" fill="#cfcfcf">CLIP Text Encode (Prompt)</text>
<circle cx="10" cy="14" r="4" fill="#FDD835"/>
<text x="20" y="19" font-size="12" fill="#f2f2f2">clip</text>
<circle cx="416.28" cy="14" r="4" fill="#FFA931" stroke="#000" stroke-width="0.8"/>
<text x="406.28" y="19" font-size="12" fill="#f2f2f2" text-anchor="end">CONDITIONING</text>
<rect x="10" y="37.3" width="405.28" height="134.91" fill="#262626"/>
<text x="11.8" y="48.5" font-size="9.178" font-family="Liberation Mono, monospace" fill="#e8e8e8">text, watermark</text>
</g>
<g transform="translate(863 186)">
<path d="M0 -15H315V254a8 8 0 0 1 -8 8H8a8 8 0 0 1 -8 -8Z" fill="#19191c"/>
<path d="M0 0V-22a8 8 0 0 1 8 -8H307a8 8 0 0 1 8 8V0Z" fill="#0a0a0c"/>
<circle cx="15" cy="-15" r="5" fill="#c6c6c6"/>
<text x="30" y="-10" font-size="14" fill="#cfcfcf">KSampler</text>
<circle cx="10" cy="14" r="4" fill="#B39DDB"/>
<text x="20" y="19" font-size="12" fill="#f2f2f2">model</text>
<circle cx="10" cy="34" r="4" fill="#FFA931"/>
<text x="20" y="39" font-size="12" fill="#f2f2f2">positive</text>
<circle cx="10" cy="54" r="4" fill="#FFA931"/>
<text x="20" y="59" font-size="12" fill="#f2f2f2">negative</text>
<circle cx="10" cy="74" r="4" fill="#FF9CF9"/>
<text x="20" y="79" font-size="12" fill="#f2f2f2">latent_image</text>
<circle cx="306" cy="14" r="4" fill="#FF9CF9" stroke="#000" stroke-width="0.8"/>
<text x="296" y="19" font-size="12" fill="#f2f2f2" text-anchor="end">LATENT</text>
<rect x="15" y="86" width="285" height="20" rx="10" fill="#222225" stroke="#45454f" stroke-width="1"/>
<path d="M31 91L21 96L31 101Z" fill="#d6d6d8"/>
<path d="M284 91L294 96L284 101Z" fill="#d6d6d8"/>
<text x="35" y="100" font-size="12" fill="#cfcfd2">seed</text>
<text x="265" y="100" font-size="12" fill="#d6d6d8" text-anchor="end">156680208700286</text>
<rect x="15" y="110" width="285" height="20" rx="10" fill="#222225" stroke="#45454f" stroke-width="1"/>
<path d="M31 115L21 120L31 125Z" fill="#d6d6d8"/>
<path d="M284 115L294 120L284 125Z" fill="#d6d6d8"/>
<text x="35" y="124" font-size="12" fill="#cfcfd2">control_after_generate</text>
<text x="265" y="124" font-size="12" fill="#d6d6d8" text-anchor="end">randomize</text>
<rect x="15" y="134" width="285" height="20" rx="10" fill="#222225" stroke="#45454f" stroke-width="1"/>
<path d="M31 139L21 144L31 149Z" fill="#d6d6d8"/>
<path d="M284 139L294 144L284 149Z" fill="#d6d6d8"/>
<text x="35" y="148" font-size="12" fill="#cfcfd2">steps</text>
<text x="265" y="148" font-size="12" fill="#d6d6d8" text-anchor="end">20</text>
<rect x="15" y="158" width="285" height="20" rx="10" fill="#222225" stroke="#45454f" stroke-width="1"/>
<path d="M31 163L21 168L31 173Z" fill="#d6d6d8"/>
<path d="M284 163L294 168L284 173Z" fill="#d6d6d8"/>
<text x="35" y="172" font-size="12" fill="#cfcfd2">cfg</text>
<text x="265" y="172" font-size="12" fill="#d6d6d8" text-anchor="end">8.0</text>
<rect x="15" y="182" width="285" height="20" rx="10" fill="#222225" stroke="#45454f" stroke-width="1"/>
<path d="M31 187L21 192L31 197Z" fill="#d6d6d8"/>
<path d="M284 187L294 192L284 197Z" fill="#d6d6d8"/>
<text x="35" y="196" font-size="12" fill="#cfcfd2">sampler_name</text>
<text x="265" y="196" font-size="12" fill="#d6d6d8" text-anchor="end">euler</text>
<rect x="15" y="206" width="285" height="20" rx="10" fill="#222225" stroke="#45454f" stroke-width="1"/>
<path d="M31 211L21 216L31 221Z" fill="#d6d6d8"/>
<path d="M284 211L294 216L284 221Z" fill="#d6d6d8"/>
<text x="35" y="220" font-size="12" fill="#cfcfd2">scheduler</text>
<text x="265" y="220" font-size="12" fill="#d6d6d8" text-anchor="end">normal</text>
<rect x="15" y="230" width="285" height="20" rx="10" fill="#222225" stroke="#45454f" stroke-width="1"/>
<path d="M31 235L21 240L31 245Z" fill="#d6d6d8"/>
<path d="M284 235L294 240L284 245Z" fill="#d6d6d8"/>
<text x="35" y="244" font-size="12" fill="#cfcfd2">denoise</text>
<text x="265" y="244" font-size="12" fill="#d6d6d8" text-anchor="end">1.00</text>
</g>
<g transform="translate(1209 188)">
<path d="M0 -15H210V38a8 8 0 0 1 -8 8H8a8 8 0 0 1 -8 -8Z" fill="#19191c"/>
<path d="M0 0V-22a8 8 0 0 1 8 -8H202a8 8 0 0 1 8 8V0Z" fill="#0a0a0c"/>
<circle cx="15" cy="-15" r="5" fill="#c6c6c6"/>
<text x="30" y="-10" font-size="14" fill="#cfcfcf">VAE Decode</text>
<circle cx="10" cy="14" r="4" fill="#FF9CF9"/>
<text x="20" y="19" font-size="12" fill="#f2f2f2">samples</text>
<circle cx="10" cy="34" r="4" fill="#FF6E6E"/>
<text x="20" y="39" font-size="12" fill="#f2f2f2">vae</text>
<circle cx="201" cy="14" r="4" fill="#64B5F6" stroke="#000" stroke-width="0.8"/>
<text x="191" y="19" font-size="12" fill="#f2f2f2" text-anchor="end">IMAGE</text>
</g>
<g transform="translate(1451 189)">
<path d="M0 -15H210V50a8 8 0 0 1 -8 8H8a8 8 0 0 1 -8 -8Z" fill="#19191c"/>
<path d="M0 0V-22a8 8 0 0 1 8 -8H202a8 8 0 0 1 8 8V0Z" fill="#0a0a0c"/>
<circle cx="15" cy="-15" r="5" fill="#c6c6c6"/>
<text x="30" y="-10" font-size="14" fill="#cfcfcf">Save Image</text>
<circle cx="10" cy="14" r="4" fill="#64B5F6"/>
<text x="20" y="19" font-size="12" fill="#f2f2f2">images</text>
<rect x="15" y="26" width="180" height="20" rx="10" fill="#222225" stroke="#45454f" stroke-width="1"/>
<text x="30" y="40" font-size="12" fill="#cfcfd2">filename_prefix</text>
<text x="180" y="40" font-size="12" fill="#d6d6d8" text-anchor="end">ComfyUI</text>
</g>
</g></svg>
<div class="abs" style="left:174.500px;top:249px;width:316px;height:71.500px;background:#171717;border-right:1.500px solid #2b2b2b;border-left:1.500px solid #2b2b2b"></div>
<div class="abs" style="left:174.500px;top:318.500px;width:316px;height:2.200px;background:#63a4f4"></div>
<div class="t" id="tab" style="left:192.500px;top:267px;font-size:27.500px;color:#fff;letter-spacing:0.25px">Unsaved Workflow</div>
<div class="abs" style="left:450px;top:275.500px;width:15px;height:15px;border-radius:50%;background:#fff"></div>
<svg style="left:515px;top:268px" width="32" height="32" viewBox="0 0 32 32" stroke="#b8b8c0" stroke-width="2.600"><path d="M16 1V31M1 16H31"/></svg>
<div class="t" id="stats" style="left:204px;top:1346px;font-size:19.800px;line-height:26px;color:#9c9c9c;white-space:pre">T: 0.00s
I: 0
N: 7 [7]
V: 14
FPS:58.82</div>

<svg style="left:0;top:0" width="2864" height="1586" viewBox="0 0 2864 1586"><path d="M347.900 184.200L432 231.600 406.800 250.300 548.500 441.300 537.300 449.400 395 258.400 367.600 272.600Z" fill="#fc4337"/></svg>
<div class="abs" style="left:2761.500px;top:1106px;width:83px;height:373px;border-radius:9px;background:#252527;border:1.500px solid #37373d"></div>
<svg style="left:2787px;top:1129px" width="33" height="33" viewBox="0 0 33 33" stroke="#e4e4e4" stroke-width="2.700" stroke-linecap="round"><path d="M16.500 2V31M2 16.500H31"/></svg>
<svg style="left:2787px;top:1203px" width="33" height="33" viewBox="0 0 33 33" stroke="#e4e4e4" stroke-width="2.700" stroke-linecap="round"><path d="M2 16.500H31"/></svg>
<svg style="left:2787px;top:1276px" width="33" height="33" viewBox="0 0 35 35" fill="none" stroke="#e4e4e4" stroke-width="2.700" stroke-linecap="round"><path d="M2 10V6a4 4 0 0 1 4-4h4M25 2h4a4 4 0 0 1 4 4v4M33 25v4a4 4 0 0 1-4 4h-4M10 33H6a4 4 0 0 1-4-4v-4"/></svg>
<svg style="left:2784px;top:1346px" width="40" height="40" viewBox="0 0 40 40" fill="none" stroke="#e4e4e4" stroke-width="2.700" stroke-linejoin="round"><path d="M2 19L38 2 22 38 18 23Z"/></svg>
<svg style="left:2785px;top:1426px" width="37" height="29" viewBox="0 0 37 29" fill="none" stroke="#e4e4e4" stroke-width="2.700"><path d="M2 14.500C6 6 11.500 2 18.500 2S31 6 35 14.500C31 23 25.500 27 18.500 27S6 23 2 14.500Z"/><circle cx="18.500" cy="14.500" r="5"/></svg>

<div class="abs" style="left:96px;top:1500px;width:2768px;height:86px;background:#171717"></div>
<div class="abs" style="left:104px;top:1520px;width:183px;height:64.500px;border-radius:11px;background:#0b0b0b"></div>
<svg style="left:116px;top:1546.800px" width="18" height="17" viewBox="0 0 20 19" fill="none" stroke="#fff" stroke-width="1.800" stroke-linecap="square"><path d="M2 1.500V8M19 5H5M8 2L5 5 8 8M18 11V17.500M1 14H15M12 11L15 14 12 17"/></svg>
<div class="t" id="rf" style="left:142.500px;top:1542.200px;font-size:23.900px;color:#fff">Resize Feed</div>
<!-- queue panel -->
<div class="abs" style="left:1097.500px;top:1502.500px;width:583px;height:100px;border-radius:12px;border:2px solid #3a3a42;background:#18181b"></div>
<svg style="left:1112px;top:1540px" width="16" height="25" viewBox="0 0 16 25" fill="#d8d0c4"><rect x="1" y="1" width="2.300" height="2.300"/><rect x="11" y="1" width="2.300" height="2.300"/><rect x="1" y="11" width="2.300" height="2.300"/><rect x="11" y="11" width="2.300" height="2.300"/><rect x="1" y="21" width="2.300" height="2.300"/><rect x="11" y="21" width="2.300" height="2.300"/></svg>
<div class="abs" style="left:1143px;top:1512px;width:256px;height:75px;border-radius:10px 0 0 10px;background:#66a6f6"></div>
<svg style="left:1170px;top:1533px" width="27" height="32" viewBox="0 0 27 32" fill="none" stroke="#181a1f" stroke-width="3.200" stroke-linejoin="round"><path d="M3 3L24 16 3 29Z"/></svg>
<div class="t" id="q" style="left:1214px;top:1534.500px;font-size:28.200px;color:#181a1f">Queue</div>
<svg style="left:1342px;top:1540px" width="32" height="19" viewBox="0 0 32 19" fill="none" stroke="#181a1f" stroke-width="3.400" stroke-linecap="round" stroke-linejoin="round"><path d="M3 3L16 16 29 3"/></svg>
<div class="abs" style="left:1398px;top:1512px;width:113.500px;height:72.500px;border-radius:0 11px 11px 0;border:2.500px solid #44444d;background:#09090b"></div>
<svg style="left:0;top:1500px" width="2864" height="86" viewBox="0 1500 2864 86"><path d="M1437.700 1537.200H1435C1433.900 1540 1430.400 1543 1427.300 1544.300V1547.200C1430.200 1546.200 1432.800 1544.600 1434.200 1543V1559.700H1437.700Z" fill="#fff"/></svg>
<svg style="left:1475px;top:1525px" width="21" height="13" viewBox="0 0 21 13" fill="none" stroke="#a4a4a8" stroke-width="3.300" stroke-linecap="round" stroke-linejoin="round"><path d="M2 11L10.500 2.500 19 11"/></svg>
<svg style="left:1475px;top:1560px" width="21" height="13" viewBox="0 0 21 13" fill="none" stroke="#77777b" stroke-width="3.300" stroke-linecap="round" stroke-linejoin="round"><path d="M2 2L10.500 10.500 19 2"/></svg>
<svg style="left:1539px;top:1536px" width="27" height="27" viewBox="0 0 27 27" stroke="#77777c" stroke-width="3.400" stroke-linecap="round"><path d="M2 2L25 25M25 2L2 25"/></svg>
<div class="abs" style="left:1615.500px;top:1533.500px;width:31.500px;height:31.500px;border-radius:5.500px;border:3.500px solid #66666b"></div>
<!-- clear -->
<div class="abs" style="left:2627px;top:1520px;width:147px;height:64.500px;border-radius:11px;background:#232323"></div>
<div class="t" id="clr" style="left:2670px;top:1541.500px;font-size:25.400px;color:#fff">Clear</div>
<div class="abs" style="left:2790px;top:1520px;width:65px;height:64.500px;border-radius:11px;background:#232323"></div>
<svg style="left:2809px;top:1540px" width="28" height="28" viewBox="0 0 28 28" stroke="#f0456c" stroke-width="5.200" stroke-linecap="round"><path d="M3 3L25 25M25 3L3 25"/></svg>
</body></html>
